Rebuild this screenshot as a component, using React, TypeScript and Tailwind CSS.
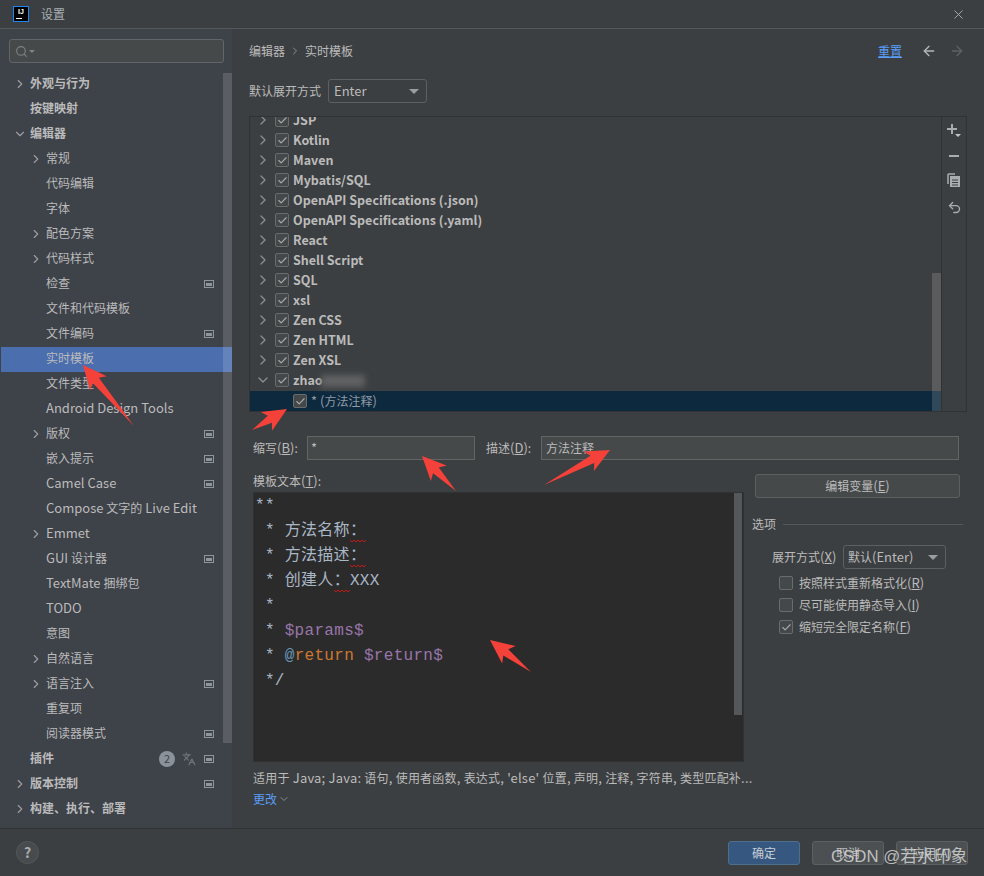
import React from 'react';
import { ChevronRight, ChevronDown, X, ArrowLeft, ArrowRight, Languages, Undo2, Check, Search } from 'lucide-react';

const navItems = [
  { label: '外观与行为', level: 0, arrow: 'right', bold: true },
  { label: '按键映射', level: 0, bold: true },
  { label: '编辑器', level: 0, arrow: 'down', bold: true },
  { label: '常规', level: 1, arrow: 'right' },
  { label: '代码编辑', level: 1 },
  { label: '字体', level: 1 },
  { label: '配色方案', level: 1, arrow: 'right' },
  { label: '代码样式', level: 1, arrow: 'right' },
  { label: '检查', level: 1, badge: true },
  { label: '文件和代码模板', level: 1 },
  { label: '文件编码', level: 1, badge: true },
  { label: '实时模板', level: 1, active: true },
  { label: '文件类型', level: 1 },
  { label: 'Android Design Tools', level: 1 },
  { label: '版权', level: 1, arrow: 'right', badge: true },
  { label: '嵌入提示', level: 1, badge: true },
  { label: 'Camel Case', level: 1, badge: true },
  { label: 'Compose 文字的 Live Edit', level: 1 },
  { label: 'Emmet', level: 1, arrow: 'right' },
  { label: 'GUI 设计器', level: 1, badge: true },
  { label: 'TextMate 捆绑包', level: 1 },
  { label: 'TODO', level: 1 },
  { label: '意图', level: 1 },
  { label: '自然语言', level: 1, arrow: 'right' },
  { label: '语言注入', level: 1, arrow: 'right', badge: true },
  { label: '重复项', level: 1 },
  { label: '阅读器模式', level: 1, badge: true },
  { label: '插件', level: 0, bold: true, badge: true, plugin: true },
  { label: '版本控制', level: 0, arrow: 'right', bold: true, badge: true },
  { label: '构建、执行、部署', level: 0, arrow: 'right', bold: true },
];

const groups = ['Kotlin', 'Maven', 'Mybatis/SQL', 'OpenAPI Specifications (.json)', 'OpenAPI Specifications (.yaml)', 'React', 'Shell Script', 'SQL', 'xsl', 'Zen CSS', 'Zen HTML', 'Zen XSL'];

// chinese runs are 12px in the reference, latin runs a bit bigger
const Mix = ({ text }: { text: string }) => (
  <>
    {text.split(/([\u0000-\u024f]+)/).map((part, i) =>
      /^[\u0000-\u024f]+$/.test(part) ? (
        <span key={i} className="text-[13px]">{part}</span>
      ) : (
        <span key={i}>{part}</span>
      )
    )}
  </>
);

const Hotkey = ({ ch }: { ch: string }) => (
  <span className="text-[13px]">
    (<span className="underline">{ch}</span>)
  </span>
);

const ProjectIcon = () => (
  <svg width="10" height="8" viewBox="0 0 10 8" className="shrink-0">
    <rect x="0.5" y="0.5" width="9" height="7" fill="none" stroke="#8f959c" />
    <rect x="2" y="3" width="6" height="3" fill="#8f959c" />
  </svg>
);

const CheckBox = ({ checked = true }: { checked?: boolean }) => (
  <span className="w-[14px] h-[14px] shrink-0 rounded-[2px] border border-[#6b6b6b] bg-[#43494a] flex items-center justify-center">
    {checked && <Check className="w-[11px] h-[11px] text-[#a9a9a9]" strokeWidth={2.5} />}
  </span>
);

const TreeRow = ({ label, open }: { label: string; open?: boolean }) => (
  <div className="h-5 flex items-center shrink-0">
    <span className="w-[25px] pl-[5px]">
      {open ? <ChevronDown className="w-4 h-4 text-[#8c8c8c]" /> : <ChevronRight className="w-4 h-4 text-[#8c8c8c]" />}
    </span>
    <CheckBox />
    <span className="ml-[4px] font-bold text-[12.5px] text-[#bbbbbb] whitespace-nowrap">{label}</span>
  </div>
);

const Arrow = ({ tip, tail }: { tip: [number, number]; tail: [number, number] }) => {
  const dx = tail[0] - tip[0];
  const dy = tail[1] - tip[1];
  const len = Math.hypot(dx, dy);
  const ux = dx / len;
  const uy = dy / len;
  const at = (d: number, w: number) => `${tip[0] + ux * d - uy * w},${tip[1] + uy * d + ux * w}`;
  const points = [at(0, 0), at(24, 11), at(20, 4), `${tail[0]},${tail[1]}`, at(20, -4), at(24, -11)].join(' ');
  return <polygon points={points} fill="#f4413a" />;
};

const Waves = () => (
  <svg width="16" height="4" viewBox="0 0 16 4" className="absolute left-0 top-[17px]">
    <path d="M0 1 L2 3 L4 1 L6 3 L8 1 L10 3 L12 1 L14 3 L16 1" stroke="#c41a16" fill="none" strokeWidth="1" />
  </svg>
);

const Sidebar = () => (
  <aside className="w-[232px] shrink-0 bg-[#3e4249] flex flex-col pl-[1px] relative">
    <div className="mx-[8px] mt-[10px] h-[24px] rounded-[3px] border border-[#62666a] bg-[#45494a] flex items-center pl-[5px]">
      <Search className="w-[13px] h-[13px] text-[#7f8386]" />
      <span className="w-0 h-0 border-x-[3px] border-x-transparent border-t-[3px] border-t-[#7f8386] ml-[1px]" />
    </div>
    <div className="mt-[8px] flex flex-col">
      {navItems.map((item) => (
        <div key={item.label} className="h-[25px] flex items-center pr-[18px] relative">
          {item.active && <div className="absolute inset-x-0 top-[1px] -bottom-[1px] bg-[#4b6eaf]" />}
          <span className={`${item.level === 0 ? 'w-[29px] pl-[12px]' : 'w-[45px] pl-[28px]'} shrink-0 relative`}>
            {item.arrow === 'right' && <ChevronRight className="w-3.5 h-3.5 text-[#9a9da1]" />}
            {item.arrow === 'down' && <ChevronDown className="w-3.5 h-3.5 text-[#9a9da1]" />}
          </span>
          <span className={`relative -mt-[2px] text-[12px] whitespace-nowrap ${item.bold ? 'font-bold' : ''} text-[#bbbbbb]`}>
            <Mix text={item.label} />
          </span>
          <span className="ml-auto flex items-center">
            {item.plugin && (
              <>
                <span className="w-4 h-4 rounded-full bg-[#8b929a] text-[#3e4249] text-[11px] flex items-center justify-center">2</span>
                <Languages className="ml-[7px] mr-[8px] w-[14px] h-[14px] text-[#70757b]" />
              </>
            )}
            {item.badge && <ProjectIcon />}
          </span>
        </div>
      ))}
    </div>
    <div className="absolute right-0 top-[44px] w-[9px] h-[670px] bg-white/15" />
  </aside>
);

const Toolbar = () => (
  <div className="w-[25px] shrink-0 border-l border-[#323232] flex flex-col items-center pt-[1px] text-[#a9adb0]">
    <div className="h-[25px] flex items-center justify-center">
      <svg width="16" height="15" viewBox="0 0 16 15">
        <path d="M6 1 V11 M1 6 H11" stroke="#a9adb0" strokeWidth="2" fill="none" />
        <path d="M9 11 H15 L12 14 Z" fill="#c4c7ca" />
      </svg>
    </div>
    <div className="h-[25px] flex items-center justify-center">
      <svg width="12" height="4" viewBox="0 0 12 4">
        <path d="M1 2 H11" stroke="#a9adb0" strokeWidth="2" fill="none" />
      </svg>
    </div>
    <div className="h-[25px] flex items-center justify-center">
      <svg width="14" height="15" viewBox="0 0 14 15">
        <path d="M1 1 H8 M1 1 V11" stroke="#a9adb0" strokeWidth="1.5" fill="none" />
        <rect x="3" y="3" width="10" height="11" fill="#a9adb0" />
        <path d="M5 7 H11 M5 9.5 H11 M5 12 H11" stroke="#3c3f41" strokeWidth="1" />
      </svg>
    </div>
    <div className="h-[27px] pt-[2px] flex items-center justify-center">
      <Undo2 className="w-[15px] h-[15px]" strokeWidth={2.2} />
    </div>
  </div>
);

const TemplateTree = () => (
  <div className="mt-[13px] ml-[17px] w-[718px] h-[296px] border border-[#323232] flex">
    <div className="flex-1 min-w-0 relative overflow-hidden flex flex-col">
      <div className="-mt-[7px]">
        <TreeRow label="JSP" />
      </div>
      {groups.map((g) => (
        <TreeRow key={g} label={g} />
      ))}
      <TreeRow label="zhao" open />
      <div className="mt-[1px] h-5 shrink-0 bg-[#0d293e] flex items-center pl-[43px]">
        <CheckBox />
        <span className="ml-[4px] text-[12px] text-[#8f9ba6]">
          <Mix text="* (方法注释)" />
        </span>
      </div>
      {/* blurred-out part of the group name */}
      <div className="absolute left-[71px] top-[258px] w-[44px] h-[12px] bg-[#606264] blur-[3px]" />
      <div className="absolute right-0 top-[156px] bottom-0 w-[9px] bg-white/15" />
    </div>
    <Toolbar />
  </div>
);

const FieldsRow = () => (
  <div className="mt-[24px] ml-[21px] flex items-center text-[12px] text-[#bbbbbb]">
    <span className="w-[54px] whitespace-nowrap">
      缩写<Hotkey ch="B" />:
    </span>
    <div className="w-[168px] h-[24px] border border-[#646464] bg-[#45494a] pl-[3px] flex items-center text-[13px]">*</div>
    <span className="ml-[11px] w-[55px] whitespace-nowrap">
      描述<Hotkey ch="D" />:
    </span>
    <div className="w-[418px] h-[24px] border border-[#646464] bg-[#45494a] pl-[4px] flex items-center">方法注释</div>
  </div>
);

const codeClass = 'h-[25px] leading-[25px] whitespace-pre';

const Editor = () => (
  <div className="mt-[4px] w-[491px] h-[270px] bg-[#2b2b2b] border border-[#323232] relative font-['Liberation_Mono','Noto_Sans_CJK_SC',monospace] text-[16px] tracking-[0.3px] text-[#a9b7c6] pl-[1px] pt-[1px]">
    <div className={codeClass}>**</div>
    <div className={codeClass}>
      {' * '}方法名称<span className="relative">：<Waves /></span>
    </div>
    <div className={codeClass}>
      {' * '}方法描述<span className="relative">：<Waves /></span>
    </div>
    <div className={codeClass}>
      {' * '}创建人<span className="relative">：<Waves /></span>XXX
    </div>
    <div className={codeClass}>{' *'}</div>
    <div className={codeClass}>
      {' * '}
      <span className="text-[#9876aa]">$params$</span>
    </div>
    <div className={codeClass}>
      {' * '}
      <span className="text-[#6897bb]">@</span>
      <span className="text-[#cc7832]">return</span>
      {' '}
      <span className="text-[#9876aa]">$return$</span>
    </div>
    <div className={codeClass}>{' */'}</div>
    <div className="absolute right-[1px] top-0 w-[8px] h-[222px] bg-[#55585a]" />
  </div>
);

const OptionRow = ({ checked, label, ch }: { checked?: boolean; label: string; ch: string }) => (
  <div className="h-[22px] flex items-center pl-[27px]">
    <CheckBox checked={checked} />
    <span className="ml-[6px] whitespace-nowrap">
      {label}<Hotkey ch={ch} />
    </span>
  </div>
);

const OptionsPanel = () => (
  <div className="ml-[8px] w-[211px] text-[12px] text-[#bbbbbb]">
    <div className="ml-[3px] h-[24px] w-[205px] rounded-[3px] border border-[#5e6060] bg-[#45494a] flex items-center justify-center">
      编辑变量<Hotkey ch="E" />
    </div>
    <div className="mt-[16px] h-[20px] flex items-center">
      <span>选项</span>
      <span className="ml-[7px] w-[180px] h-px bg-[#55585a]" />
    </div>
    <div className="mt-[11px] flex items-center pl-[20px]">
      <span className="w-[71px] whitespace-nowrap">
        展开方式<Hotkey ch="X" />
      </span>
      <div className="w-[103px] h-[24px] rounded-[3px] border border-[#5e6060] flex items-center pl-[4px] relative">
        <Mix text="默认(Enter)" />
        <span className="absolute right-[7px] top-[9px] w-0 h-0 border-x-[5px] border-x-transparent border-t-[5px] border-t-[#9a9da0]" />
      </div>
    </div>
    <div className="mt-[3px]">
      <OptionRow checked={false} label="按照样式重新格式化" ch="R" />
      <OptionRow checked={false} label="尽可能使用静态导入" ch="I" />
      <OptionRow checked label="缩短完全限定名称" ch="F" />
    </div>
  </div>
);

const FooterButton = ({ label, primary }: { label: string; primary?: boolean }) => (
  <div className={`w-[72px] h-[24px] rounded-[3px] border flex items-center justify-center text-[12px] ${primary ? 'bg-[#365880] border-[#4c708c] text-[#c8ced4]' : 'bg-[#4c5052] border-[#5e6060] text-[#bbbbbb]'}`}>
    {label}
  </div>
);

export default function App() {
  return (
    <div className="w-[984px] h-[876px] relative overflow-hidden bg-[#3c3f41] flex flex-col font-['Noto_Sans_CJK_SC','Noto_Sans',sans-serif]">
      <header className="h-[29px] shrink-0 flex items-center border-b border-[#555759] bg-[#3c3f41] pl-[13px] pr-[18px]">
        <div className="w-4 h-4 bg-black border border-[#1e88f0] relative flex justify-center">
          <span className="text-[7px] leading-[9px] font-bold text-white font-['Liberation_Sans',sans-serif]">IJ</span>
          <span className="absolute left-[2px] bottom-[2px] w-[6px] h-px bg-white" />
        </div>
        <span className="ml-[12px] text-[12px] text-[#a9b0b5]">设置</span>
        <X className="ml-auto w-[15px] h-[15px] text-[#a9adb0]" strokeWidth={1.5} />
      </header>

      <div className="flex-1 min-h-0 flex">
        <Sidebar />
        <main className="flex-1 min-w-0 flex flex-col">
          <div className="mt-[12px] h-[20px] flex items-center pl-[17px] pr-[19px] text-[12px] text-[#bbbbbb]">
            <span>编辑器</span>
            <ChevronRight className="mx-[4px] w-3 h-3 text-[#8c8c8c]" />
            <span>实时模板</span>
            <span className="ml-auto text-[#589df6] underline">重置</span>
            <ArrowLeft className="ml-[19px] w-[16px] h-[16px] text-[#b4b7ba]" strokeWidth={2} />
            <ArrowRight className="ml-[12px] w-[16px] h-[16px] text-[#5e6164]" strokeWidth={2} />
          </div>
          <div className="mt-[18px] flex items-center pl-[17px] text-[12px] text-[#bbbbbb]">
            <span className="w-[79px] whitespace-nowrap">默认展开方式</span>
            <div className="w-[99px] h-[24px] rounded-[3px] border border-[#5e6060] flex items-center pl-[5px] relative text-[13px]">
              Enter
              <span className="absolute right-[7px] top-[9px] w-0 h-0 border-x-[5px] border-x-transparent border-t-[5px] border-t-[#9a9da0]" />
            </div>
          </div>
          <TemplateTree />
          <FieldsRow />
          <div className="ml-[21px] mt-[14px] flex">
            <div className="w-[491px] flex flex-col">
              <div className="h-[14px] flex items-center text-[12px] text-[#bbbbbb]">
                模板文本<Hotkey ch="T" />:
              </div>
              <Editor />
              <div className="mt-[7px] h-[18px] flex items-center text-[12px] tracking-[0.2px] text-[#bbbbbb] whitespace-pre">
                <Mix text="适用于 Java; Java: 语句, 使用者函数, 表达式, 'else' 位置, 声明, 注释, 字符串, 类型匹配补..." />
              </div>
              <div className="mt-[3px] h-[18px] flex items-center text-[12px] text-[#589df6]">
                更改
                <ChevronDown className="ml-[1px] w-3 h-3 text-[#8c8c8c]" />
              </div>
            </div>
            <OptionsPanel />
          </div>
        </main>
      </div>

      <footer className="h-[48px] shrink-0 border-t border-[#323232] flex items-center pl-[16px] pr-[16px] gap-[12px]">
        <div className="w-[23px] h-[23px] rounded-full border border-[#55585a] bg-[#484b4d] text-[#a9adb0] text-[14px] font-bold flex items-center justify-center mr-auto">?</div>
        <FooterButton label="确定" primary />
        <FooterButton label="取消" />
        <FooterButton label="应用(A)" />
      </footer>

      {/* annotations drawn over the screenshot */}
      <svg width="984" height="876" className="absolute inset-0 pointer-events-none">
        <Arrow tip={[83, 365]} tail={[134, 426]} />
        <Arrow tip={[287, 409]} tail={[252, 430]} />
        <Arrow tip={[422, 456]} tail={[456, 491]} />
        <Arrow tip={[610, 450]} tail={[544, 485]} />
        <Arrow tip={[490, 640]} tail={[531, 672]} />
      </svg>
      <div className="absolute left-[831px] top-[845px] text-[16.8px] leading-[24px] text-[#d5d5d5]/85 font-['Liberation_Sans','Noto_Sans_CJK_SC',sans-serif] whitespace-nowrap">CSDN @若水印象</div>
    </div>
  );
}
